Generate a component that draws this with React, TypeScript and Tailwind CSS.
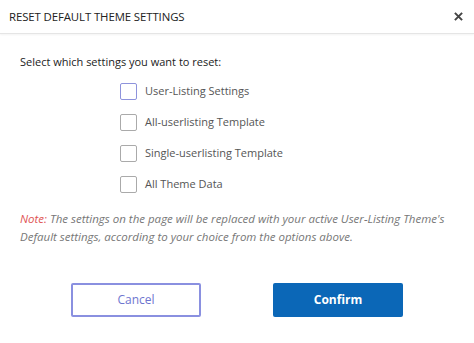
export default function App() {
  const options = [
    "User-Listing Settings",
    "All-userlisting Template",
    "Single-userlisting Template",
    "All Theme Data",
  ];

  return (
    <div
      className="h-[343px] w-[474px] bg-white text-[#333]"
      style={{ fontFamily: '"Open Sans", "Noto Sans", sans-serif' }}
    >
      {/* Header */}
      <div className="flex h-[34px] items-center justify-between border-b border-[#e5e5e5] pl-[9px] pr-[11px] shadow-[0_1px_2px_rgba(0,0,0,0.05)]">
        <h2 className="text-[11.4px] tracking-[-0.1px] text-[#222]">RESET DEFAULT THEME SETTINGS</h2>
        <svg className="h-[9px] w-[9px] text-[#444]" viewBox="0 0 10 10" fill="none" stroke="currentColor">
          <path strokeWidth={2.2} d="M1 1l8 8M9 1l-8 8" />
        </svg>
      </div>

      {/* Body */}
      <div className="px-5 pt-[20px]">
        <p className="text-[11px] font-medium text-[#222]">Select which settings you want to reset:</p>

        <div className="ml-[100px] mt-[12px] flex flex-col gap-[14px]">
          {options.map((o, i) => (
            <label key={o} className="flex items-center gap-[8px] text-[11px] text-[#555]">
              <span
                className={
                  i === 0
                    ? "h-[17px] w-[17px] rounded-[2px] border border-[#8e93dc]"
                    : "h-[17px] w-[17px] rounded-[2px] border border-[#aaa]"
                }
              />
              {o}
            </label>
          ))}
        </div>

        <p className="mt-[17px] text-[11.5px] italic leading-[18px] text-[#777]">
          <span className="text-[#e05555]">Note:</span> The settings on the page will be replaced with your active
          User-Listing Theme's Default settings, according to your choice from the options above.
        </p>
      </div>

      {/* Buttons */}
      <div className="mt-[37px] flex gap-[72px] pl-[71px]">
        <button className="h-[34px] w-[130px] rounded-[2px] border-2 border-[#8a90e0] text-[12px] text-[#6e76cf]">
          Cancel
        </button>
        <button className="h-[34px] w-[130px] rounded-[2px] bg-[#0b67b7] text-[12px] font-bold text-white">
          Confirm
        </button>
      </div>
    </div>
  );
}
